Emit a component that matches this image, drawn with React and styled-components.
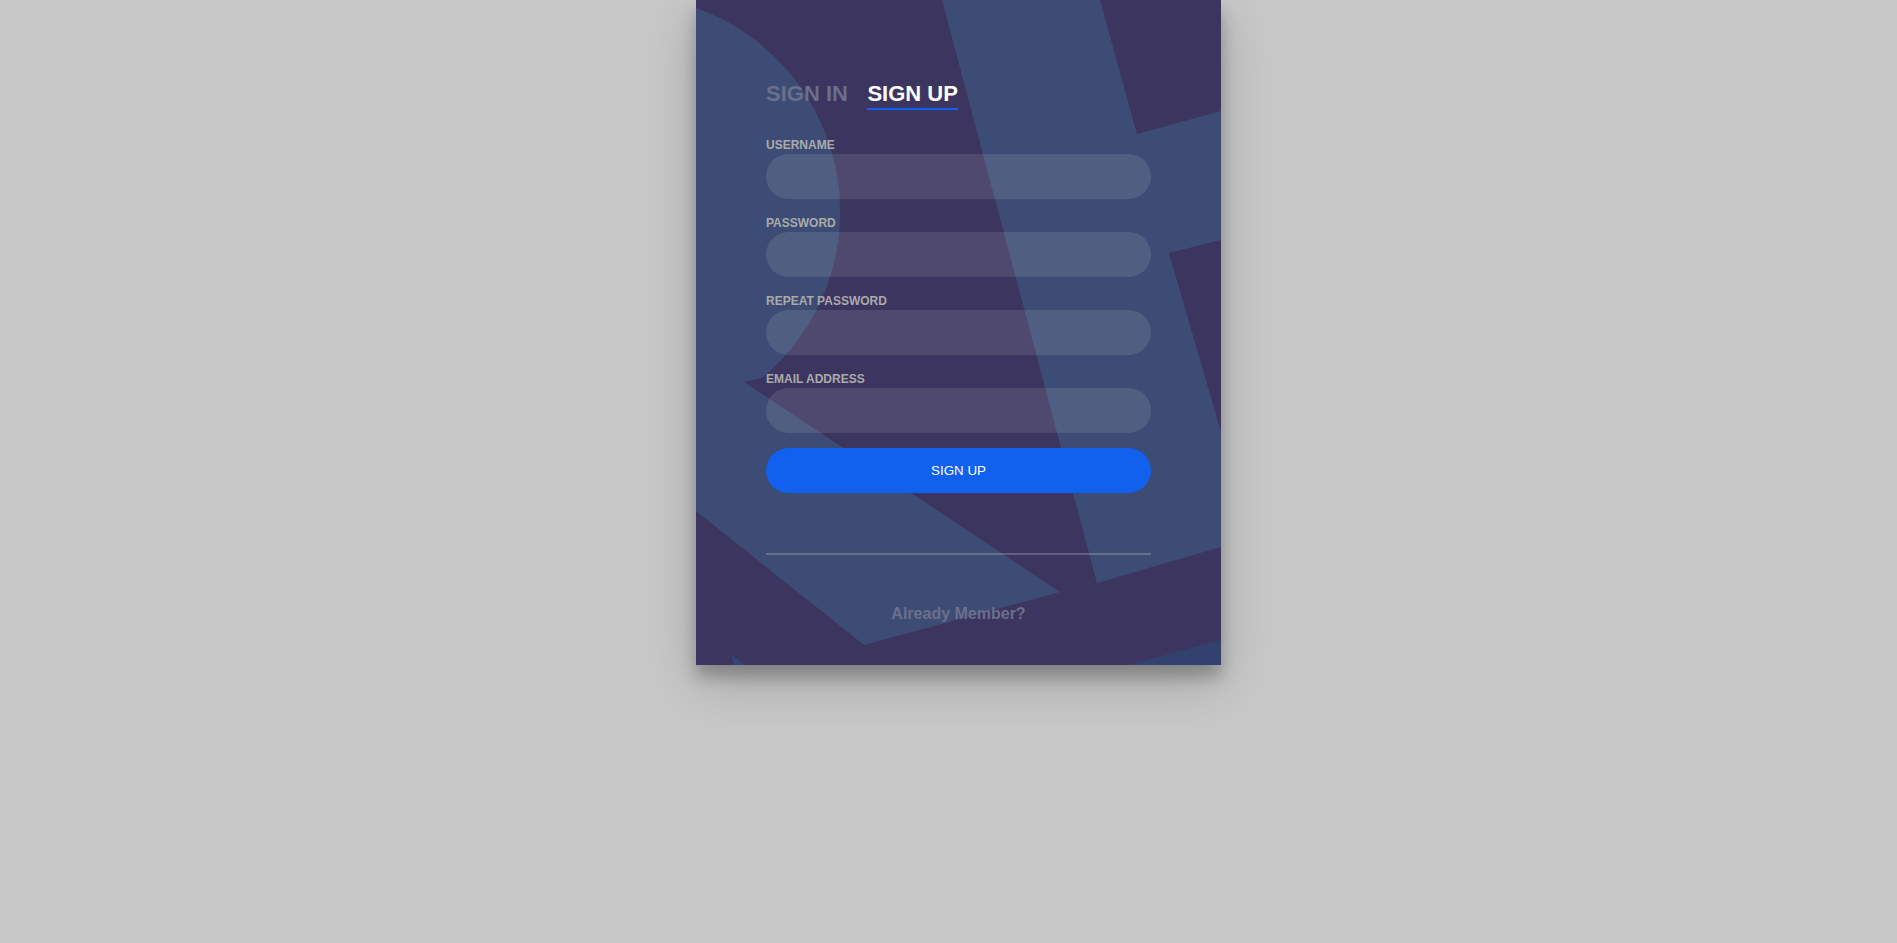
import React from "react";
import styled, { createGlobalStyle } from "styled-components";

const GlobalStyle = createGlobalStyle`
  *, *::before, *::after { box-sizing: border-box; }
  html, body { margin: 0; padding: 0; min-height: 100%; }
  body {
    background: #c8c8c8;
    color: #6a6f8c;
    font: 700 16px/18px "Liberation Sans", Arial, sans-serif;
  }
`;

const Page = styled.div`
  min-height: 100vh;
  padding-left: 20px;
`;

const Card = styled.div`
  position: relative;
  width: 525px;
  height: 665px;
  margin: 0 auto;
  overflow: hidden;
  background: #3c3560;
  box-shadow: 0 12px 15px 0 rgba(0, 0, 0, 0.24), 0 17px 50px 0 rgba(0, 0, 0, 0.19);
`;

const Backdrop = styled.svg`
  position: absolute;
  inset: 0;
  width: 100%;
  height: 100%;
  display: block;
`;

const Content = styled.div`
  position: relative;
  padding: 85px 70px 0 70px;
`;

const Tabs = styled.div`
  display: flex;
  gap: 4.5px;
  margin-bottom: 26px;
`;

const Tab = styled.span`
  display: inline-block;
  font-size: 22px;
  line-height: 18px;
  font-weight: 700;
  text-transform: uppercase;
  padding-bottom: 5px;
  margin-right: 15px;
  border-bottom: 2px solid ${(p) => (p.$active ? "#1161ee" : "transparent")};
  color: ${(p) => (p.$active ? "#fff" : "#6a6f8c")};
`;

const Group = styled.div`
  margin-bottom: 15px;
`;

const Label = styled.label`
  display: block;
  color: #aaa;
  font-size: 12px;
  line-height: 18px;
  font-weight: 700;
  text-transform: uppercase;
`;

const Input = styled.input`
  display: block;
  width: 100%;
  height: 45px;
  border: none;
  outline: none;
  padding: 15px 20px;
  border-radius: 25px;
  background: rgba(255, 255, 255, 0.1);
  color: #fff;
  font: 400 13.33px "Liberation Sans", Arial, sans-serif;
`;

const Button = styled.button`
  display: block;
  width: 100%;
  height: 45px;
  border: none;
  padding: 15px 20px;
  border-radius: 25px;
  background: #1161ee;
  color: #fff;
  text-transform: uppercase;
  font: 400 13.33px/15px "Liberation Sans", Arial, sans-serif;
  cursor: pointer;
`;

const Divider = styled.div`
  height: 2px;
  margin: 60px 0 50px 0;
  background: rgba(255, 255, 255, 0.2);
`;

const Foot = styled.div`
  text-align: center;
  font-size: 16px;
  line-height: 18px;
  font-weight: 700;
  color: #6a6f8c;
`;

const fields = ["Username", "Password", "Repeat Password", "Email Address"];

export default function App() {
  return (
    <>
      <GlobalStyle />
      <Page>
        <Card>
          <Backdrop viewBox="0 0 525 665" preserveAspectRatio="none">
            <path
              d="M0,8 A216,216 0 0 1 66,378 L48,382 L364,592 L168,645 L0,511 Z"
              fill="#3d4c74"
            />
            <path
              d="M246,0 L404,0 L441,134 L525,111 L525,240 L473,253 L525,432 L525,547 L401,583 Z"
              fill="#3d4c74"
            />
            <path d="M431,665 L525,640 L525,665 Z" fill="#33416e" />
            <path d="M35,654 L48,665 L38,665 Z" fill="#344676" />
          </Backdrop>
          <Content>
            <Tabs>
              <Tab>Sign In</Tab>
              <Tab $active>Sign Up</Tab>
            </Tabs>
            {fields.map((f, i) => (
              <Group key={f}>
                <Label htmlFor={`f${i}`}>{f}</Label>
                <Input id={`f${i}`} type={i === 1 || i === 2 ? "password" : "text"} />
              </Group>
            ))}
            <Button type="button">Sign Up</Button>
            <Divider />
            <Foot>Already Member?</Foot>
          </Content>
        </Card>
      </Page>
    </>
  );
}
